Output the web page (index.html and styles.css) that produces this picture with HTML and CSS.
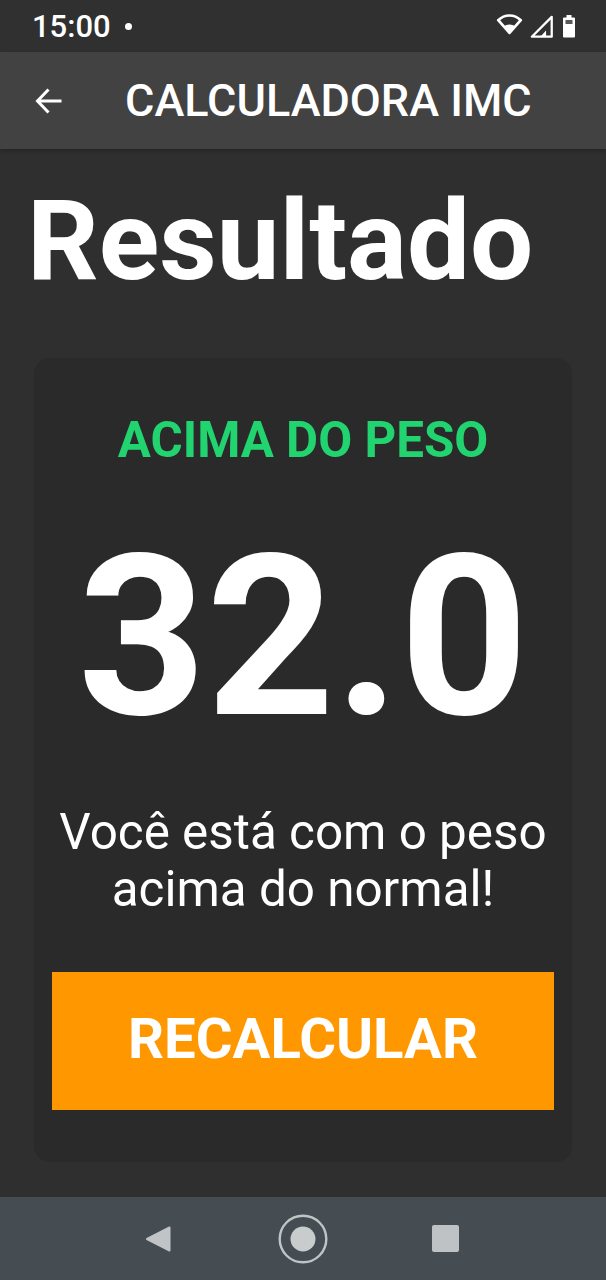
FILE: index.html
```html
<!DOCTYPE html>
<html lang="pt-BR">
<head>
    <meta charset="UTF-8">
    <meta name="viewport" content="width=device-width, initial-scale=1.0">
    <title>Calculadora IMC</title>
    <link rel="stylesheet" href="styles.css">
</head>
<body>
    <div class="screen">
        <div class="status-bar">
            <div class="status-left">
                <span class="clock">15:00</span>
                <span class="dot"></span>
            </div>
            <div class="status-icons">
                <svg class="icon-wifi" width="27" height="23" viewBox="0 0 24 20">
                    <path d="M12 17.500 2 6.200C4.600 3.600 8 2 12 2s7.400 1.600 10 4.200Z" fill="none" stroke="#fff" stroke-width="2.400" stroke-linejoin="round"/>
                    <path d="M12 18 6.800 11.800C8.200 10.700 10 10 12 10s3.800.7 5.200 1.800Z" fill="#fff"/>
                </svg>
                <svg class="icon-signal" width="25" height="25" viewBox="0 0 22 22">
                    <path d="M20 2.500V20H2.500Z" fill="none" stroke="#fff" stroke-width="2" stroke-linejoin="round"/>
                    <path d="M10 20 15 14.500V20Z" fill="#fff"/>
                </svg>
                <svg class="icon-battery" width="14" height="24" viewBox="0 0 14 24">
                    <path d="M4.500 1h5v2.500h2.500a1 1 0 0 1 1 1V22.500a1 1 0 0 1-1 1H2a1 1 0 0 1-1-1V4.500a1 1 0 0 1 1-1h2.500Z" fill="#fff"/>
                    <rect x="3.500" y="6" width="7" height="4" fill="#55575a"/>
                </svg>
            </div>
        </div>

        <header class="app-bar">
            <svg class="back-arrow" width="30" height="30" viewBox="0 0 30 30">
                <path d="M27.500 15H3.500M14.500 3.500 3.500 15l11 11.500" fill="none" stroke="#fff" stroke-width="3"/>
            </svg>
            <h1 class="app-title">CALCULADORA IMC</h1>
        </header>

        <main class="content">
            <h2 class="page-title">Resultado</h2>
            <section class="card">
                <p class="status-label">ACIMA DO PESO</p>
                <p class="imc-value">32.0</p>
                <p class="message">Você está com o peso<br>acima do normal!</p>
                <button class="recalc-button">RECALCULAR</button>
            </section>
        </main>

        <nav class="nav-bar">
            <svg class="nav-back" width="28" height="30" viewBox="0 0 28 30">
                <path d="M25.500 3.500V26.500L3 15Z" fill="#c1c4c6" stroke="#c1c4c6" stroke-width="2" stroke-linejoin="round"/>
            </svg>
            <svg width="50" height="50" viewBox="0 0 50 50">
                <circle cx="25" cy="25" r="23.300" fill="none" stroke="#c1c4c6" stroke-width="2.400"/>
                <circle cx="25" cy="25" r="12.500" fill="#c9cccd"/>
            </svg>
            <span class="nav-square"></span>
        </nav>
    </div>
</body>
</html>
```

FILE: styles.css
```css
body {
    margin: 0;
    background-color: #2f2f2f;
    font-family: Roboto, "Liberation Sans", sans-serif;
    color: #fff;
}

.screen {
    width: 606px;
    height: 1280px;
    display: flex;
    flex-direction: column;
    overflow: hidden;
}

.status-bar {
    height: 52px;
    flex-shrink: 0;
    box-sizing: border-box;
    padding: 0 30px 0 32px;
    display: flex;
    justify-content: space-between;
    align-items: center;
    background-color: #303030;
}

.status-left {
    display: flex;
    align-items: center;
    gap: 14px;
}

.clock {
    font-size: 31px;
    font-weight: 500;
}

.dot {
    width: 7px;
    height: 7px;
    border-radius: 50%;
    background-color: #fff;
}

.status-icons {
    display: flex;
    align-items: center;
    gap: 8px;
}

.icon-wifi {
    margin: 0 -2px 3px 0;
}

.app-bar {
    height: 97px;
    flex-shrink: 0;
    display: flex;
    align-items: center;
    box-sizing: border-box;
    padding-left: 34px;
    background-color: #424242;
    box-shadow: 0 2px 4px rgba(0, 0, 0, 0.25);
}

.app-title {
    margin: 0 0 0 61px;
    font-size: 45px;
    font-weight: 500;
    white-space: nowrap;
}

.content {
    flex: 1;
    padding: 0 34px;
}

.page-title {
    margin: 32px 0 0 -7px;
    font-size: 112px;
    line-height: 120px;
    font-weight: 700;
}

.card {
    margin-top: 57px;
    height: 804px;
    box-sizing: border-box;
    padding: 53px 18px 0;
    border-radius: 16px;
    background-color: #2a2a2a;
    text-align: center;
}

.status-label {
    margin: 0;
    font-size: 49.300px;
    line-height: 58px;
    font-weight: 700;
    color: #21d46f;
}

.imc-value {
    margin: 37px 0 0;
    font-size: 224px;
    line-height: 264px;
    font-weight: 700;
}

.message {
    margin: 34px 0 0;
    font-size: 49.400px;
    line-height: 57px;
}

.recalc-button {
    display: block;
    width: 100%;
    height: 138px;
    margin-top: 54px;
    padding: 0 0 4px;
    border: none;
    background-color: #ff9800;
    color: #fff;
    font-family: inherit;
    font-size: 56.300px;
    font-weight: 700;
}

.nav-bar {
    height: 83px;
    flex-shrink: 0;
    display: flex;
    align-items: center;
    background-color: #454d53;
    padding-left: 144px;
    gap: 104px;
}

.nav-back {
    margin-right: 2px;
}

.nav-square {
    width: 27px;
    height: 27px;
    border-radius: 2px;
    background-color: #bfc2c4;
}
```
